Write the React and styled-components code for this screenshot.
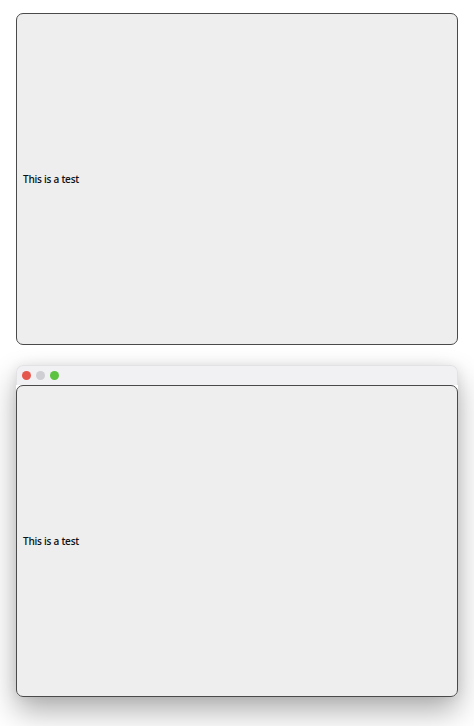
import React from 'react';
import styled, { createGlobalStyle } from 'styled-components';

const GlobalStyle = createGlobalStyle`
  html, body {
    margin: 0;
    padding: 0;
    background: #ffffff;
  }
`;

const Page = styled.div`
  display: flex;
  flex-direction: column;
  gap: 20px;
  padding: 13px 16px 30px 16px;
  width: 442px;
`;

const Panel = styled.div`
  display: flex;
  align-items: center;
  box-sizing: border-box;
  height: ${({ h }) => h}px;
  padding: 0 6px;
  background: #eeeeee;
  border: 1px solid #4a4a4a;
  border-radius: 7px;
  font-family: 'Open Sans', 'DejaVu Sans', sans-serif;
  font-size: 10px;
  font-weight: 600;
  letter-spacing: -0.25px;
  color: #111111;
`;

const Window = styled.div`
  display: flex;
  flex-direction: column;
  border-radius: 7px;
  box-shadow: 0 14px 30px rgba(0, 0, 0, 0.32), 0 0 12px rgba(0, 0, 0, 0.07);
`;

const TitleBar = styled.div`
  display: flex;
  align-items: center;
  gap: 5px;
  box-sizing: border-box;
  height: 20px;
  padding: 0 4px 0 5px;
  background: #f1f0f3;
  border: 1px solid #e2e1e4;
  border-bottom: none;
  border-radius: 7px 7px 0 0;
`;

const Light = styled.span`
  width: 9px;
  height: 9px;
  border-radius: 50%;
  background: ${({ color }) => color};
`;

export default function App() {
  return (
    <>
      <GlobalStyle />
      <Page>
        <Panel h={332}>This is a test</Panel>
        <Window>
          <TitleBar>
            <Light color="#e5574c" />
            <Light color="#cfced3" />
            <Light color="#5cc23f" />
          </TitleBar>
          <Panel h={312}>This is a test</Panel>
        </Window>
      </Page>
    </>
  );
}
